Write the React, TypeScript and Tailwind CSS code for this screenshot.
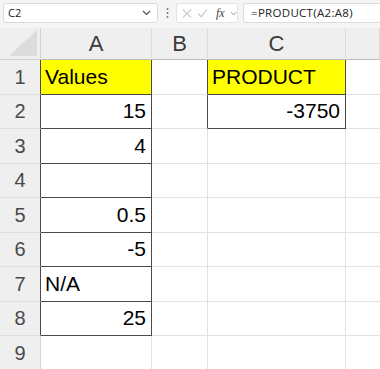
import React from "react";

type Row = { a?: string; aRight?: boolean; c?: string; cRight?: boolean; tall: boolean };

const rows: Row[] = [
  { a: "Values", c: "PRODUCT", tall: true },
  { a: "15", aRight: true, c: "-3750", cRight: true, tall: false },
  { a: "4", aRight: true, tall: true },
  { a: "", tall: false },
  { a: "0.5", aRight: true, tall: true },
  { a: "-5", aRight: true, tall: false },
  { a: "N/A", tall: true },
  { a: "25", aRight: true, tall: false },
  { tall: true },
];

export default function App() {
  return (
    <div className="w-[380px] h-[369px] overflow-hidden bg-white font-['Liberation_Sans',Arial,sans-serif]">
      {/* Formula bar */}
      <div className="h-[28px] bg-[#f5f5f5] flex items-start pt-[3px] pl-[3px]">
        <div className="w-[155px] h-[20px] bg-white border border-[#dcdcdc] rounded-[3px] flex items-center justify-between pl-[4px] pr-[6px]">
          <span className="text-[11px] text-[#222] font-['Open_Sans',sans-serif]">C2</span>
          <svg width="9" height="6" viewBox="0 0 9 6"><path d="M1 1 L4.5 4.5 L8 1" fill="none" stroke="#555" strokeWidth="1.2" /></svg>
        </div>
        <div className="w-[18px] h-[20px] flex items-center justify-center">
          <svg width="3" height="12" viewBox="0 0 3 12"><circle cx="1.5" cy="2" r="1" fill="#777" /><circle cx="1.5" cy="6" r="1" fill="#777" /><circle cx="1.5" cy="10" r="1" fill="#777" /></svg>
        </div>
        <div className="w-[62px] h-[20px] bg-white border border-[#e3e3e3] rounded-[3px] flex items-center pl-[5px] gap-[5px]">
          <svg width="11" height="11" viewBox="0 0 11 11"><path d="M1 1 L10 10 M10 1 L1 10" stroke="#c4c4c4" strokeWidth="1.1" /></svg>
          <svg width="12" height="10" viewBox="0 0 12 10"><path d="M1 5.5 L4.5 9 L11 1" fill="none" stroke="#c4c4c4" strokeWidth="1.1" /></svg>
          <span className="italic text-[12px] text-[#444] ml-[3px] font-['Liberation_Serif',serif]">fx</span>
          <svg width="8" height="5" viewBox="0 0 8 5"><path d="M1 1 L4 4 L7 1" fill="none" stroke="#888" strokeWidth="1" /></svg>
        </div>
        <div className="ml-[5px] flex-1 h-[20px] bg-white border border-[#dcdcdc] border-r-0 rounded-l-[3px] flex items-center pl-[7px]">
          <span className="text-[11.5px] text-[#222] tracking-[0.3px] font-['Open_Sans',sans-serif]">=PRODUCT(A2:A8)</span>
        </div>
      </div>

      {/* Sheet */}
      <div className="grid grid-cols-[41px_111px_56px_138px_1fr]">
        <div className="h-[32px] bg-[#efefef] border-r border-b border-[#d4d4d4] flex items-end justify-end pr-[3px] pb-[3px]">
          <svg width="28" height="26" viewBox="0 0 28 26"><path d="M28 0 L28 26 L0 26 Z" fill="#dcdcdc" /></svg>
        </div>
        {["A", "B", "C", ""].map((l, i) => (
          <div
            key={i}
            className="h-[32px] bg-[#efefef] border-r border-b border-r-[#dcdcdc] border-b-[#bdbdbd] flex items-center justify-center text-[22px] text-[#3c3c3c]"
          >
            {l}
          </div>
        ))}
        {rows.map((r, i) => {
          const aBox = i < 8;
          const cBox = i < 2;
          const h = r.tall ? "h-[35px]" : "h-[34px]";
          return (
            <React.Fragment key={i}>
              <div
                className={`${h} bg-[#efefef] border-b border-b-[#e0e0e0] border-r ${aBox ? "border-r-[#4a4a4a]" : "border-r-[#d4d4d4]"} flex items-end justify-center pb-[7px] leading-none text-[20px] text-[#4a4a4a]`}
              >
                {i + 1}
              </div>
              <div
                className={`${h} border-r border-b ${aBox ? "border-[#4a4a4a]" : "border-[#e2e2e2]"} flex items-end pb-[7px] leading-none text-[21px] text-black ${r.aRight ? "justify-end pr-[5px]" : "justify-start pl-[4px]"} ${i === 0 ? "bg-[#ffff00]" : "bg-white"}`}
              >
                {r.a}
              </div>
              <div
                className={`${h} border-r border-b border-b-[#e2e2e2] ${cBox ? "border-r-[#4a4a4a]" : "border-r-[#e2e2e2]"} bg-white`}
              />
              <div
                className={`${h} border-r border-b ${cBox ? "border-[#4a4a4a]" : "border-[#e2e2e2]"} flex items-end pb-[7px] leading-none text-[21px] text-black ${r.cRight ? "justify-end pr-[5px]" : "justify-start pl-[4px]"} ${i === 0 ? "bg-[#ffff00]" : "bg-white"}`}
              >
                {r.c}
              </div>
              <div className={`${h} border-b border-b-[#e2e2e2] bg-white`} />
            </React.Fragment>
          );
        })}
      </div>
    </div>
  );
}
